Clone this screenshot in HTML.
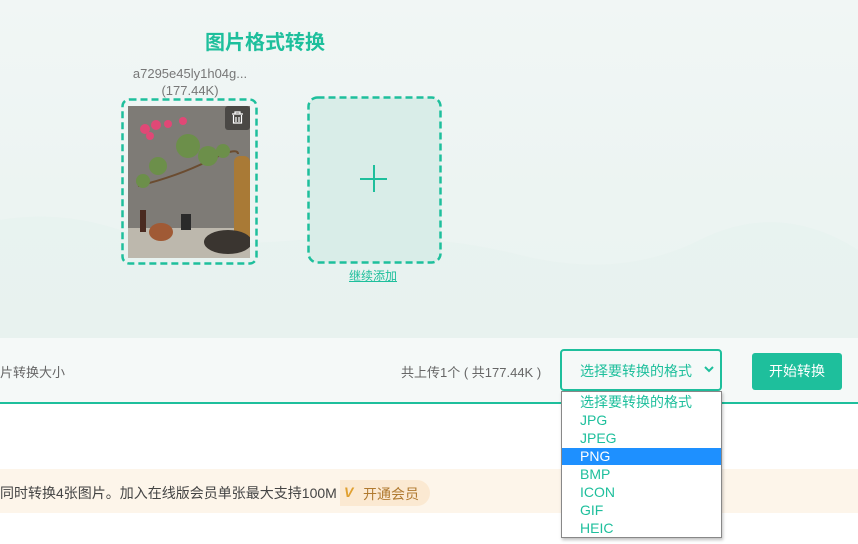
<!DOCTYPE html>
<html><head><meta charset="utf-8"><style>
*{margin:0;padding:0;box-sizing:border-box}
body{width:858px;height:544px;overflow:hidden;background:#fff;font-family:"Liberation Sans","Noto Sans CJK SC",sans-serif;position:relative}
.top{position:absolute;left:0;top:0;width:858px;height:338px;background:linear-gradient(180deg,#f1f6f5 0%,#ecf4f2 60%,#eaf3f1 100%)}
.abs{position:absolute}
</style></head><body>
<div class="top"></div>
<svg class="abs" style="left:0;top:200px" width="858" height="138"><path d="M0 20 Q60 10 120 30 T300 40 T520 55 T700 40 T858 50 V138 H0Z" fill="#e6f1ee" opacity=".6"/></svg>
<div class="abs" style="left:205px;top:26px;font-size:20px;font-weight:bold;color:#1ebf9c">图片格式转换</div>
<div class="abs" style="left:110px;top:65px;width:160px;text-align:center;font-size:13px;color:#777;line-height:17px">a7295e45ly1h04g...<br>(177.44K)</div>
<svg class="abs" style="left:121px;top:98px" width="137" height="167"><rect x="1.5" y="1.5" width="134" height="164" rx="7" fill="none" stroke="#1ebf9c" stroke-width="2.5" stroke-dasharray="7 4"/></svg>
<svg class="abs" style="left:128px;top:106px" width="122" height="152">
<rect width="122" height="152" fill="#7e7b76"/>
<rect y="122" width="122" height="30" fill="#bdb8ad"/>
<rect x="106" y="50" width="16" height="90" rx="6" fill="#a97a36"/>
<ellipse cx="100" cy="136" rx="24" ry="12" fill="#3a3530"/>
<ellipse cx="33" cy="126" rx="12" ry="9" fill="#a05a35"/>
<rect x="12" y="104" width="6" height="22" fill="#4a2a20"/>
<rect x="53" y="108" width="10" height="16" fill="#2a2a2a"/>
<path d="M10 80 Q50 70 80 55 T110 48" stroke="#6b4c30" stroke-width="2" fill="none"/>
<g fill="#6c8f4a"><circle cx="60" cy="40" r="12"/><circle cx="80" cy="50" r="10"/><circle cx="30" cy="60" r="9"/><circle cx="15" cy="75" r="7"/><circle cx="95" cy="45" r="7"/></g>
<g fill="#e04876"><circle cx="17" cy="23" r="5"/><circle cx="28" cy="19" r="5"/><circle cx="40" cy="18" r="4"/><circle cx="55" cy="15" r="4"/><circle cx="22" cy="30" r="4"/></g>
<rect x="97" y="0" width="25" height="24" rx="3" fill="#4a4845"/>
<path d="M104 8h11M107 8V6h5v2M105.5 9v8h8V9M108 11v5M111 11v5" stroke="#fff" stroke-width="1.2" fill="none"/>
</svg>
<svg class="abs" style="left:307px;top:96px" width="135" height="168"><rect x="1.5" y="1.5" width="132" height="165" rx="9" fill="#d9ede8" stroke="#1ebf9c" stroke-width="2.5" stroke-dasharray="7 4"/></svg>
<div class="abs" style="left:360px;top:178px;width:27px;height:2px;background:#1ebf9c"></div>
<div class="abs" style="left:373px;top:165px;width:2px;height:27px;background:#1ebf9c"></div>
<div class="abs" style="left:349px;top:267px;font-size:12px;color:#1ebf9c;text-decoration:underline">继续添加</div>
<div class="abs" style="left:0;top:338px;width:858px;height:64px;background:#f5f9f8"></div>
<div class="abs" style="left:0;top:402px;width:858px;height:2px;background:#1ebf9c"></div>
<div class="abs" style="left:0;top:362px;font-size:13px;color:#666">片转换大小</div>
<div class="abs" style="left:401px;top:362px;font-size:13px;color:#666">共上传1个 ( 共177.44K )</div>
<div class="abs" style="left:560px;top:349px;width:162px;height:42px;border:2px solid #1ebf9c;border-radius:4px;background:#f5f9f8"></div>
<div class="abs" style="left:580px;top:361px;font-size:14px;color:#1ebf9c">选择要转换的格式</div>
<svg class="abs" style="left:704px;top:366px" width="10" height="8"><path d="M1 1l4 4 4-4" stroke="#1ebf9c" stroke-width="2" fill="none"/></svg>
<div class="abs" style="left:752px;top:353px;width:90px;height:37px;background:#1ebf9c;border-radius:3px;color:#fff;font-size:14px;text-align:center;line-height:37px">开始转换</div>
<div class="abs" style="left:0;top:469px;width:858px;height:44px;background:#fdf5ea"></div>
<div class="abs" style="left:0;top:483px;font-size:14px;color:#444">同时转换4张图片。加入在线版会员单张最大支持100M</div>
<div class="abs" style="left:340px;top:480px;width:90px;height:26px;background:#fbe9d2;border-radius:0 13px 13px 0"></div>
<div class="abs" style="left:344px;top:484px;font-size:14px;color:#e0a030;font-weight:bold;font-style:italic">V</div>
<div class="abs" style="left:363px;top:484px;font-size:14px;color:#b07a30">开通会员</div>
<div class="abs" style="left:561px;top:391px;width:161px;height:147px;background:#fff;border:1px solid #888;box-shadow:1px 2px 3px rgba(0,0,0,.25)"></div>
<div class="abs" style="left:562px;top:448px;width:159px;height:17px;background:#1e90ff"></div>
<div class="abs" style="left:580px;top:393px;font-size:14px;line-height:18px;color:#1ebf9c">选择要转换的格式<br>JPG<br>JPEG<br><span style="color:#fff">PNG</span><br>BMP<br>ICON<br>GIF<br>HEIC</div>
</body></html>
